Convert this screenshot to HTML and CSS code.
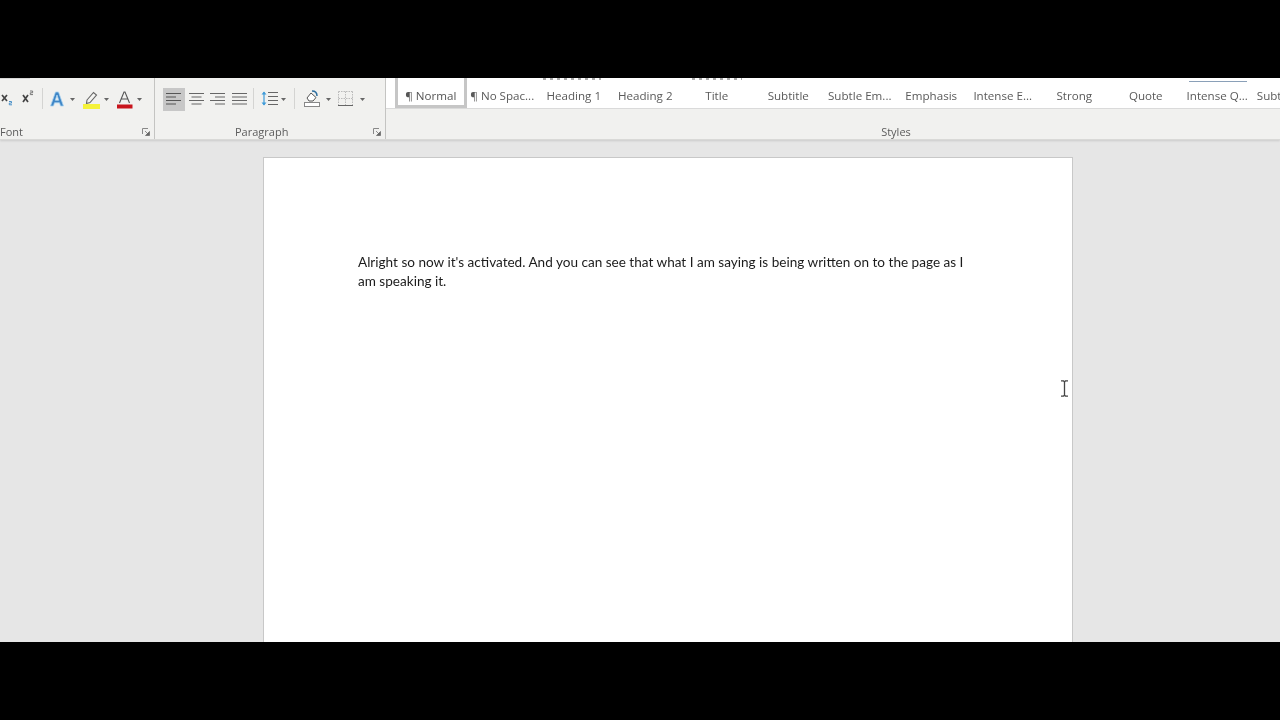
FILE: index.html
```html
<!DOCTYPE html>
<html lang="en">
<head>
<meta charset="utf-8">
<title>Document - Word</title>
<link rel="stylesheet" href="styles.css">
</head>
<body>
<div class="app">
  <header class="ribbon">
    <section class="group group-font">
      <div class="combo-edge"></div>
      <div class="tools">
        <svg class="ic ic-sub" viewBox="0 0 12 14"><path d="M1 3l5 6M6 3L1 9" stroke="#444" stroke-width="1.7" fill="none"/><path d="M8 9.500h2.500v1.600H8.300v1.700h2.700" stroke="#4a90c8" stroke-width="1" fill="none"/></svg>
        <svg class="ic ic-sup" viewBox="0 0 12 14"><path d="M1 5l5 7M6 5l-5 7" stroke="#444" stroke-width="1.7" fill="none"/><path d="M8 1h2.600v1.800H8.300v1.800H11" stroke="#777" stroke-width="1" fill="none"/></svg>
        <span class="sep sep-font"></span>
        <svg class="ic ic-effect" viewBox="0 0 16 18"><path d="M1.500 16L6.500 2h3l5 14h-3l-1-3.200H5.500L4.500 16zM6.300 10.300h3.400L8 5z" fill="#3f86c6" stroke="#a9d3f0" stroke-width=".8"/></svg>
        <svg class="caret caret-a" viewBox="0 0 5 3"><path d="M0 0h5L2.500 3z"/></svg>
        <svg class="ic ic-mark" viewBox="0 0 17 19"><path d="M4 10L10.500 2.500l3 2.500L7 12.500l-3.500 1z" fill="#f4f4f2" stroke="#666" stroke-width="1.100"/><rect x="0" y="14" width="17" height="5" fill="#f5f23a"/></svg>
        <svg class="caret caret-b" viewBox="0 0 5 3"><path d="M0 0h5L2.500 3z"/></svg>
        <svg class="ic ic-color" viewBox="0 0 17 19"><path d="M3.500 13L8 2h1l4.500 11M5.500 9h6" stroke="#555" stroke-width="1.100" fill="none"/><rect x="1" y="14.500" width="15.500" height="4" fill="#c8141c"/></svg>
        <svg class="caret caret-c" viewBox="0 0 5 3"><path d="M0 0h5L2.500 3z"/></svg>
      </div>
      <div class="label-row label-left">
        <span class="label">Font</span>
        <svg class="launcher" viewBox="0 0 8 8"><path d="M.5 6V.5H6" stroke="#888" fill="none"/><path d="M3 3l3.500 3.500M7.500 3.500v4h-4z" stroke="#666" fill="#666" stroke-width=".7"/></svg>
      </div>
    </section>

    <section class="group group-para">
      <div class="tools">
        <span class="btn-on">
          <svg class="ic ic-align" viewBox="0 0 15 14"><path d="M0 1.500h15M0 5h10M0 8.500h15M0 12h10" stroke="#555" stroke-width="1.200"/></svg>
        </span>
        <svg class="ic ic-align ic-center" viewBox="0 0 15 14"><path d="M0 1.500h15M2.500 5h10M0 8.500h15M2.500 12h10" stroke="#666" stroke-width="1.200"/></svg>
        <svg class="ic ic-align ic-right" viewBox="0 0 15 14"><path d="M0 1.500h15M5 5h10M0 8.500h15M5 12h10" stroke="#666" stroke-width="1.200"/></svg>
        <svg class="ic ic-align ic-just" viewBox="0 0 15 14"><path d="M0 1.500h15M0 5h15M0 8.500h15M0 12h15" stroke="#666" stroke-width="1.200"/></svg>
        <span class="sep sep-a"></span>
        <svg class="ic ic-spacing" viewBox="0 0 17 15"><path d="M3 1v13" stroke="#3f9bd8" stroke-width="1.200"/><path d="M.5 3.500L3 .5l2.500 3zM.5 11.500L3 14.500l2.500-3z" fill="#3f9bd8"/><path d="M7 1.500h10M7 5.500h10M7 9.500h10M7 13.500h10" stroke="#666" stroke-width="1.200"/></svg>
        <svg class="caret caret-d" viewBox="0 0 5 3"><path d="M0 0h5L2.500 3z"/></svg>
        <span class="sep sep-b"></span>
        <svg class="ic ic-shade" viewBox="0 0 16 17"><path d="M3 8l4-5 5 4.500-3 3.500H5z" fill="#fff" stroke="#555"/><path d="M8 1c3 0 5 2 5 5" stroke="#2f6f9f" stroke-width="1.500" fill="none"/><rect x=".5" y="12.500" width="15" height="4" fill="#fff" stroke="#888"/></svg>
        <svg class="caret caret-e" viewBox="0 0 5 3"><path d="M0 0h5L2.500 3z"/></svg>
        <svg class="ic ic-border" viewBox="0 0 15 15"><path d="M.5.500h14M.5 7.500h14M7.500.500v14M.5.500v14M14.500.500v14" stroke="#bbb" stroke-dasharray="1.500 1" fill="none"/><path d="M0 14.500h15" stroke="#666"/></svg>
        <svg class="caret caret-f" viewBox="0 0 5 3"><path d="M0 0h5L2.500 3z"/></svg>
      </div>
      <div class="label-row label-para">
        <span class="label">Paragraph</span>
        <svg class="launcher" viewBox="0 0 8 8"><path d="M.5 6V.5H6" stroke="#888" fill="none"/><path d="M3 3l3.500 3.500M7.500 3.500v4h-4z" stroke="#666" fill="#666" stroke-width=".7"/></svg>
      </div>
    </section>

    <section class="group-styles">
      <div class="gallery">
        <div class="style style-on"><span class="style-name">¶ Normal</span></div>
        <div class="style"><span class="style-name">¶ No Spac...</span></div>
        <div class="style"><span class="peek peek-h"></span><span class="style-name">Heading 1</span></div>
        <div class="style"><span class="style-name">Heading 2</span></div>
        <div class="style"><span class="peek peek-t"></span><span class="style-name">Title</span></div>
        <div class="style"><span class="style-name">Subtitle</span></div>
        <div class="style"><span class="style-name">Subtle Em...</span></div>
        <div class="style"><span class="style-name">Emphasis</span></div>
        <div class="style"><span class="style-name">Intense E...</span></div>
        <div class="style"><span class="style-name">Strong</span></div>
        <div class="style"><span class="style-name">Quote</span></div>
        <div class="style style-rule"><span class="style-name">Intense Q...</span></div>
        <div class="style"><span class="style-name">Subtle Ref...</span></div>
      </div>
      <div class="label-row label-styles"><span class="label">Styles</span></div>
    </section>
  </header>

  <main class="workspace">
    <article class="page">
      <p class="doc-text">Alright so now it's activated. And you can see that what I am saying is being written on to the page as I am speaking it.</p>
    </article>
    <svg class="ibeam" viewBox="0 0 9 17"><path d="M1 .8h2.500L4.500 2l1-1.200H8M4.500 2v13M1 16.200h2.500L4.500 15l1 1.200H8" stroke="#444" stroke-width="1.300" fill="none"/></svg>
  </main>
</div>
</body>
</html>
```

FILE: styles.css
```css
* { box-sizing: border-box; }

html, body {
  margin: 0;
  height: 100%;
  background: #000;
  overflow: hidden;
}

.app {
  width: 1280px;
  height: 564px;
  margin-top: 78px;
  display: flex;
  flex-direction: column;
  overflow: hidden;
  background: #e6e6e6;
  font-family: "Open Sans", "Noto Sans", sans-serif;
  filter: blur(0.35px);
}

/* Ribbon */
.ribbon {
  flex: none;
  height: 62px;
  display: flex;
  background: #f1f1ef;
  border-bottom: 1px solid #d9d9d7;
  box-shadow: 0 1px 2px rgba(0, 0, 0, .12);
  position: relative;
  z-index: 1;
}

.group {
  flex: none;
  height: 61px;
  display: flex;
  flex-direction: column;
  border-right: 1px solid #c4c4c2;
}

.group-font { width: 155px; }
.group-para { width: 231px; }

.combo-edge {
  width: 30px;
  height: 1px;
  margin-bottom: -1px;
  background: #d6d6d6;
}

.tools {
  height: 33px;
  padding-top: 10px;
  display: flex;
  align-items: flex-start;
}

.ic, .caret { display: block; flex: none; }

.caret {
  width: 5px;
  height: 3px;
  margin-top: 10px;
  fill: #666;
}

.sep {
  flex: none;
  width: 1px;
  height: 21px;
  background: #d4d4d2;
}

/* Font tools */
.ic-sub { width: 12px; height: 14px; margin-left: 1px; margin-top: 4px; }
.ic-sup { width: 12px; height: 14px; margin-left: 9px; margin-top: 2px; }
.sep-font { margin-left: 8px; }
.ic-effect { width: 16px; height: 18px; margin-left: 6px; margin-top: 2px; }
.caret-a { margin-left: 5px; }
.ic-mark { width: 17px; height: 19px; margin-left: 8px; margin-top: 2px; }
.caret-b { margin-left: 4px; }
.ic-color { width: 17px; height: 19px; margin-left: 7px; margin-top: 2px; }
.caret-c { margin-left: 4px; }

/* Paragraph tools */
.btn-on {
  flex: none;
  width: 22px;
  height: 23px;
  margin-left: 8px;
  margin-top: 0;
  padding: 4px 3px;
  background: #c7c7c7;
}

.ic-align { width: 15px; height: 14px; }
.ic-center { margin-left: 4px; margin-top: 4px; }
.ic-right { margin-left: 6px; margin-top: 4px; }
.ic-just { margin-left: 7px; margin-top: 4px; }
.sep-a { margin-left: 6px; }
.ic-spacing { width: 17px; height: 15px; margin-left: 7px; margin-top: 3px; }
.caret-d { margin-left: 3px; }
.sep-b { margin-left: 8px; }
.ic-shade { width: 16px; height: 17px; margin-left: 9px; margin-top: 2px; }
.caret-e { margin-left: 6px; }
.ic-border { width: 15px; height: 15px; margin-left: 7px; margin-top: 3px; }
.caret-f { margin-left: 7px; }

/* Labels */
.label-row {
  height: 28px;
  padding-top: 12px;
  display: flex;
  align-items: flex-start;
  justify-content: space-between;
}

.label {
  font-size: 11px;
  line-height: 17px;
  color: #5c5c5c;
}

.launcher {
  flex: none;
  width: 8px;
  height: 8px;
  margin-top: 5px;
  margin-right: 4px;
}

.label-para { padding-left: 80px; }

.group-styles {
  flex: none;
  width: 1020px;
  height: 61px;
  display: flex;
  flex-direction: column;
}

.gallery {
  height: 31px;
  padding-left: 9px;
  display: grid;
  grid-template-columns: repeat(13, 71.5px);
  background: #fff;
  border-bottom: 1px solid #dadada;
  overflow: hidden;
}

.style {
  height: 30px;
  padding-top: 9px;
  display: flex;
  flex-direction: column;
  align-items: center;
  text-align: center;
  font-size: 11.6px;
  line-height: 17px;
  color: #5a5a5a;
  white-space: nowrap;
  position: relative;
}

.style-on {
  border: 3px solid #c6c6c6;
  border-top: 0;
  color: #555;
}

.style-rule::before {
  content: "";
  position: absolute;
  top: 3px;
  left: 7px;
  width: 58px;
  height: 1px;
  background: #8aa0b8;
}

.peek {
  position: absolute;
  top: 0;
  height: 2px;
  background: repeating-linear-gradient(90deg, #aaa 0 3px, transparent 3px 7px);
}

.peek-h { left: 5px; width: 58px; }
.peek-t { left: 11px; width: 50px; }

.label-styles {
  justify-content: center;
  padding-top: 14px;
}

/* Document area */
.workspace {
  flex: 1;
  min-height: 0;
  position: relative;
  padding: 17px 0 0 263px;
  overflow: hidden;
}

.page {
  width: 810px;
  height: 600px;
  background: #fff;
  border: 1px solid #c8c8c8;
  padding: 95px 94px 0 94px;
}

.doc-text {
  margin: 0;
  width: 620px;
  font-family: Lato, "Liberation Sans", sans-serif;
  font-size: 13.57px;
  line-height: 19px;
  color: #1c1c1c;
}

.ibeam {
  position: absolute;
  left: 1059.500px;
  top: 240px;
  width: 9px;
  height: 17px;
}
```
